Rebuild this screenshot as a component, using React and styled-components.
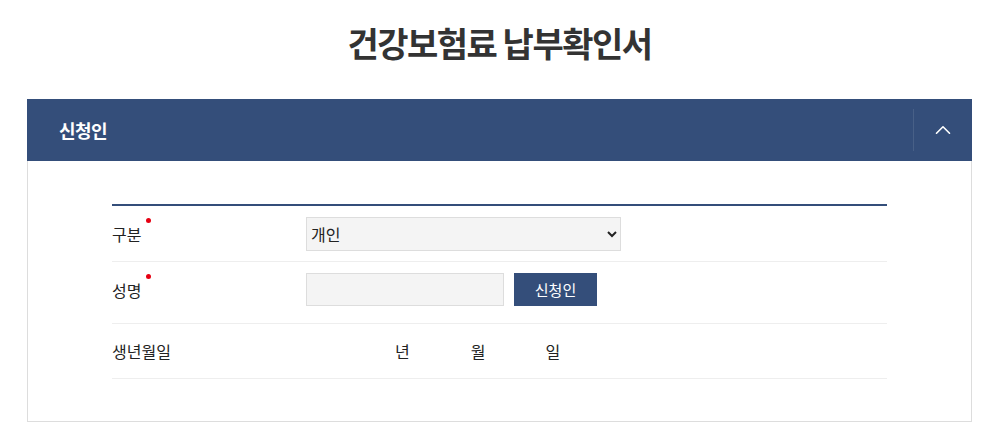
import React from 'react'
import styled, { createGlobalStyle } from 'styled-components'
import { ChevronUp } from 'lucide-react'

const GlobalStyle = createGlobalStyle`
  body {
    margin: 0;
    background: #fff;
    font-family: "Noto Sans CJK KR", "Noto Sans", sans-serif;
    color: #333;
  }
`;

const Page = styled.div`
  width: 1000px;
  padding: 0 28px 0 27px;
  box-sizing: border-box;
`;

const Title = styled.h2`
  margin: 0;
  padding-top: 18px;
  height: 99px;
  box-sizing: border-box;
  text-align: center;
  font-size: 34px;
  font-weight: 700;
  letter-spacing: -1.5px;
  line-height: 50px;
  color: #333;
`;

const Header = styled.div`
  height: 62px;
  background: #344e7a;
  display: flex;
  align-items: center;
  justify-content: space-between;
  padding-left: 32px;
`;

const HeaderTitle = styled.h3`
  margin: 0;
  font-size: 18px;
  font-weight: 700;
  color: #fff;
  letter-spacing: -0.5px;
`;

const Toggle = styled.button`
  width: 59px;
  height: 42px;
  border: none;
  border-left: 1px solid rgba(255, 255, 255, 0.1);
  background: transparent;
  color: #fff;
  display: flex;
  align-items: center;
  justify-content: center;
  padding: 0;
  cursor: pointer;
`;

const Body = styled.div`
  border: 1px solid #ddd;
  border-top: none;
  padding: 43px 84px 42px;
`;

const Table = styled.div`
  border-top: 2px solid #344e7a;
`;

const Row = styled.div`
  display: grid;
  grid-template-columns: 194px 1fr;
  align-items: center;
  border-bottom: 1px solid #eee;
  padding: ${({ $pad }) => $pad};
  min-height: ${({ $h }) => $h}px;
  box-sizing: content-box;
`;

const Label = styled.span`
  position: relative;
  justify-self: start;
  font-size: 16px;
  color: #222;
  ${({ $required }) => $required && `
    &::after {
      content: '';
      position: absolute;
      right: -10px;
      top: -4px;
      width: 5px;
      height: 5px;
      border-radius: 50%;
      background: #e60012;
    }
  `}
`;

const Field = styled.div`
  display: flex;
  align-items: center;
`;

const Select = styled.select`
  width: 315px;
  height: 34px;
  border: 1px solid #ddd;
  background: #f4f4f4;
  font-family: inherit;
  font-size: 16px;
  color: #222;
  padding: 0;
  border-radius: 0;
  outline: none;
`;

const Input = styled.input`
  width: 198px;
  height: 33px;
  box-sizing: border-box;
  border: 1px solid #ddd;
  background: #f4f4f4;
  outline: none;
`;

const Button = styled.button`
  margin-left: 10px;
  width: 83px;
  height: 33px;
  border: none;
  background: #344e7a;
  color: #fff;
  font-family: inherit;
  font-size: 15px;
  cursor: pointer;
`;

const Unit = styled.span`
  margin-left: ${({ $gap }) => $gap}px;
  font-size: 16px;
  color: #222;
`;

export default function App() {
  return (
    <Page>
      <GlobalStyle />
      <Title>건강보험료 납부확인서</Title>
      <Header>
        <HeaderTitle>신청인</HeaderTitle>
        <Toggle aria-label="접기">
          <ChevronUp size={26} strokeWidth={1.5} />
        </Toggle>
      </Header>
      <Body>
        <Table>
          <Row $h={34} $pad="11px 0 10px">
            <Label $required>구분</Label>
            <Field>
              <Select defaultValue="개인">
                <option>개인</option>
                <option>사업장</option>
              </Select>
            </Field>
          </Row>
          <Row $h={33} $pad="11px 0 17px">
            <Label $required>성명</Label>
            <Field>
              <Input type="text" />
              <Button>신청인</Button>
            </Field>
          </Row>
          <Row $h={54} $pad="0">
            <Label>생년월일</Label>
            <Field>
              <Unit $gap={89}>년</Unit>
              <Unit $gap={61}>월</Unit>
              <Unit $gap={60}>일</Unit>
            </Field>
          </Row>
        </Table>
      </Body>
    </Page>
  )
}
